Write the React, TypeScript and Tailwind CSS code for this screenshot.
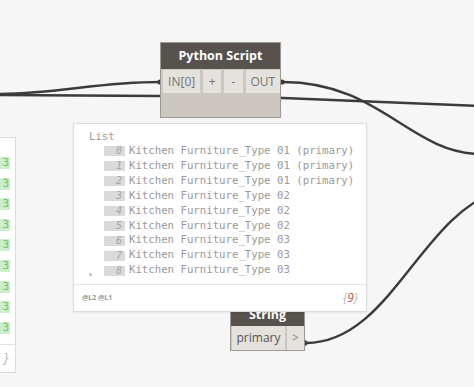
import React from "react";

const ROWS = [
  "Kitchen Furniture_Type 01 (primary)",
  "Kitchen Furniture_Type 01 (primary)",
  "Kitchen Furniture_Type 01 (primary)",
  "Kitchen Furniture_Type 02",
  "Kitchen Furniture_Type 02",
  "Kitchen Furniture_Type 02",
  "Kitchen Furniture_Type 03",
  "Kitchen Furniture_Type 03",
  "Kitchen Furniture_Type 03",
];

const SANS = "font-['Open_Sans','Noto_Sans',sans-serif]";
const MONO = "font-['DejaVu_Sans_Mono','Liberation_Mono',monospace]";

function Wires() {
  return (
    <svg className="absolute inset-0" width={474} height={387} fill="none">
      <g stroke="#3b3b3b" strokeWidth={2.4} strokeLinecap="round">
        <path d="M-5 94 C 60 94, 95 82, 160 82" />
        <path d="M-5 95 L 160 96 L 283 98 L 480 106" />
        <path d="M283 82 C 380 82, 410 153, 480 154" />
        <path d="M306 343 C 390 343, 420 215, 500 190" />
      </g>
      <circle cx={160} cy={82} r={2.6} fill="#3b3b3b" />
      <circle cx={282} cy={82} r={2.6} fill="#3b3b3b" />
      <path d="M304 339 L309 343 L304 347 Z" fill="#3b3b3b" />
    </svg>
  );
}

function PythonNode() {
  return (
    <div className={`absolute left-[160px] top-[42px] flex h-[76px] w-[121px] flex-col border border-[#9c9892] bg-[#ccc8c1] ${SANS}`}>
      <div className="flex h-[26px] items-center justify-center bg-[#57524d] text-[12.5px] font-bold text-white">
        Python Script
      </div>
      <div className="flex gap-[3px] pl-[2px] pt-[1px] text-[12px] text-[#727272]">
        <div className="flex h-[23px] w-[38px] items-center justify-center bg-[#e5e2dd]">IN[0]</div>
        <div className="flex h-[23px] w-[18px] items-center justify-center bg-[#e5e2dd]">+</div>
        <div className="flex h-[23px] w-[19px] items-center justify-center bg-[#e5e2dd]">-</div>
        <div className="flex h-[23px] w-[35px] items-center justify-center bg-[#e5e2dd]">OUT</div>
      </div>
    </div>
  );
}

function StringNode() {
  return (
    <div className={`absolute left-[230px] top-[300px] flex h-[51px] w-[75px] flex-col border border-[#9c9892] bg-[#ccc8c1] ${SANS}`}>
      <div className="flex h-[25px] items-end justify-center bg-[#57524d] pb-[5px] text-[12.5px] font-bold leading-none text-white">
        String
      </div>
      <div className="flex flex-1 gap-[2px] pl-[1px] text-[12px] text-[#555]">
        <div className="flex w-[53px] items-center justify-center bg-[#e5e2dd]">primary</div>
        <div className="flex flex-1 items-center justify-center bg-[#e5e2dd] text-[#888]">&gt;</div>
      </div>
    </div>
  );
}

function ListPanel() {
  return (
    <div className="absolute left-[73px] top-[123px] flex h-[189px] w-[294px] flex-col border border-[#dcdcdc] bg-white shadow-[0_1px_2px_rgba(0,0,0,0.08)]">
      <div className={`relative flex-1 pl-[15px] pt-[5px] text-[10.7px] text-[#9a9a9a] ${MONO}`}>
        <div className="h-[15px] leading-[15px]">List</div>
        {ROWS.map((row, i) => (
          <div key={i} className="flex h-[14.9px] items-center pl-[15px]">
            <span className="mr-[4px] flex h-[10px] w-[21px] items-center justify-end bg-[#dadada] pr-[3px] text-[10px] italic leading-none text-[#a5a5a5]">
              {i}
            </span>
            <span className="leading-none">{row}</span>
          </div>
        ))}
        <div className="absolute left-[15px] top-[149px] h-[3px] w-[3px] rounded-full bg-[#bdbdbd]" />
      </div>
      <div className={`flex h-[27px] items-center justify-between border-t border-[#e2e2e2] pl-[8px] pr-[8px] ${SANS}`}>
        <span className="text-[7px] font-bold text-[#9a9a9a]">@L2 @L1</span>
        <span className="text-[12px] italic text-[#c2574f]">
          <span className="text-[#b8b8b8]">{"{"}</span>9<span className="text-[#b8b8b8]">{"}"}</span>
        </span>
      </div>
    </div>
  );
}

function SidePanel() {
  return (
    <div className={`absolute left-[-12px] top-[137px] flex h-[236px] w-[28px] flex-col border border-[#dcdcdc] bg-white ${MONO}`}>
      <div className="flex flex-1 flex-col items-end gap-[8.6px] pr-[5px] pt-[19px]">
        {Array.from({ length: 9 }).map((_, i) => (
          <span key={i} className="h-[12px] bg-[#cdeecb] pl-[4px] pr-[1px] text-[11px] leading-[12px] text-[#6cc36a]">
            3
          </span>
        ))}
      </div>
      <div className="flex h-[28px] items-center justify-end border-t border-[#e2e2e2] pr-[5px] text-[12px] italic text-[#b8b8b8]">
        {"}"}
      </div>
    </div>
  );
}

export default function App() {
  return (
    <div className="relative h-[387px] w-[474px] overflow-hidden bg-[#f6f6f6]">
      <Wires />
      <SidePanel />
      <PythonNode />
      <StringNode />
      <ListPanel />
    </div>
  );
}
